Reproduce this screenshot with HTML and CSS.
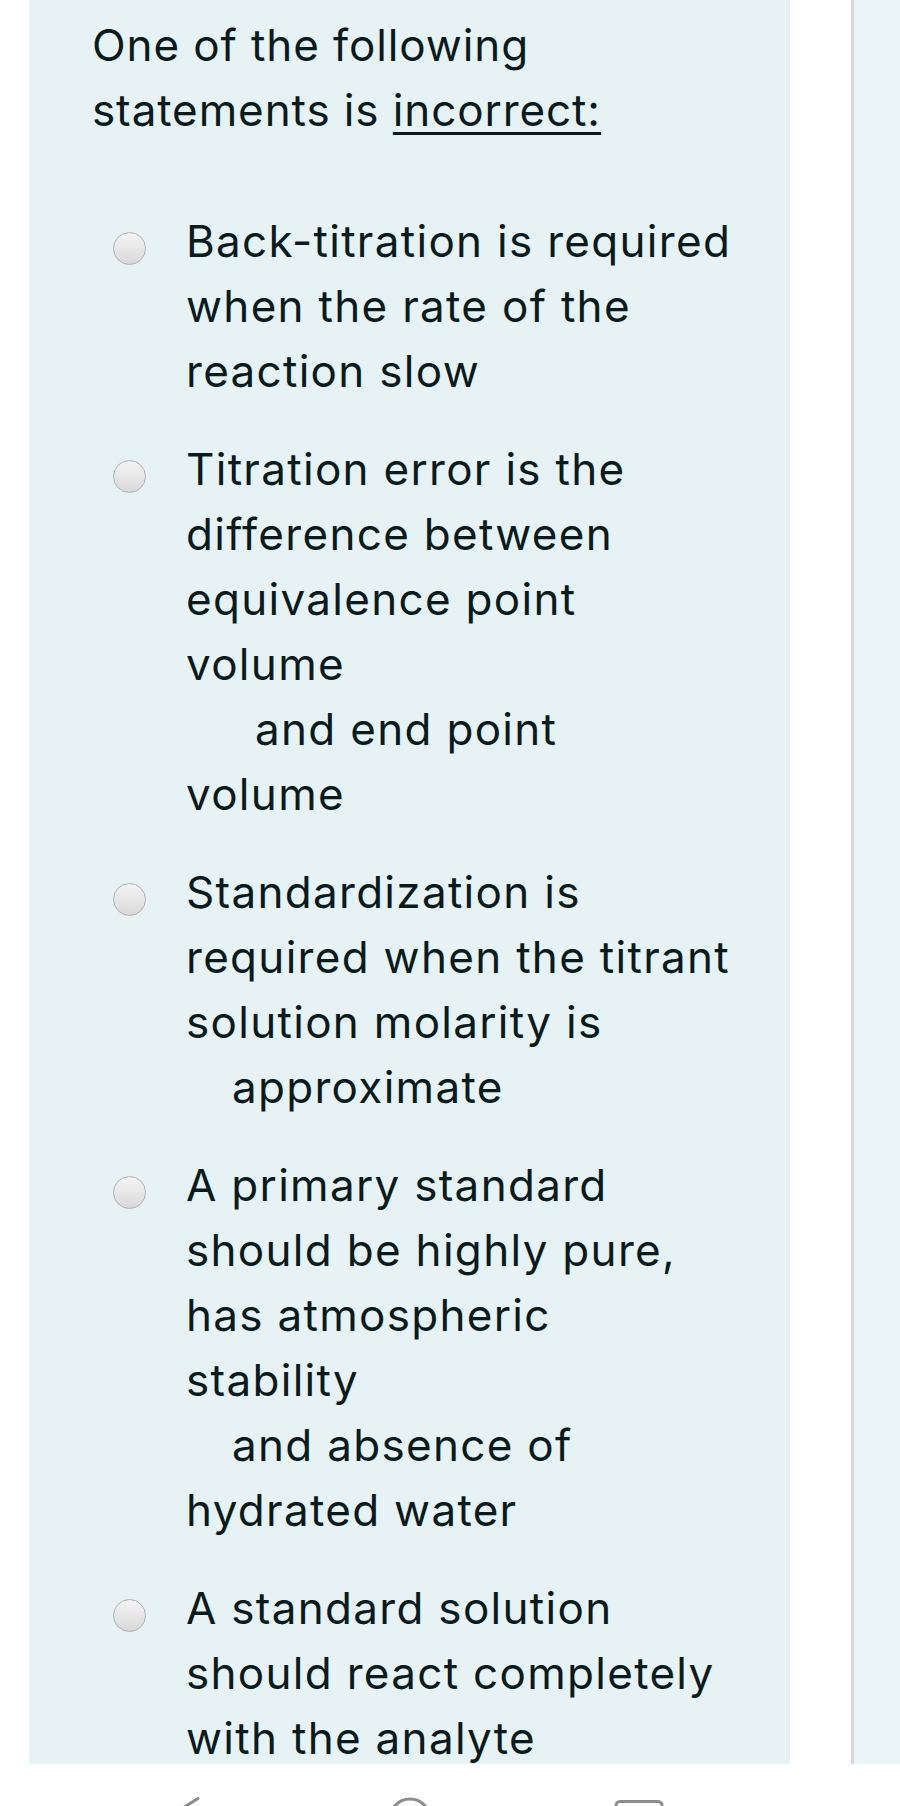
FILE: index.html
```html
<!DOCTYPE html>
<html>
<head>
<meta charset="utf-8">
<link rel="stylesheet" href="styles.css">
</head>
<body>
<div class="screen">
  <div class="top">
    <div class="panel">
      <div class="question">One of the following<br>statements is <span class="u">incorrect:</span></div>
      <div class="options">
        <div class="option">
          <span class="radio"></span>
          <div class="label">Back-titration is required<br>when the rate of the<br>reaction slow</div>
        </div>
        <div class="option">
          <span class="radio"></span>
          <div class="label">Titration error is the<br>difference between<br>equivalence point<br>volume<br><span class="ind6">and end point</span><br>volume</div>
        </div>
        <div class="option">
          <span class="radio"></span>
          <div class="label">Standardization is<br>required when the titrant<br>solution molarity is<br><span class="ind4">approximate</span></div>
        </div>
        <div class="option">
          <span class="radio"></span>
          <div class="label">A primary standard<br>should be highly pure,<br>has atmospheric<br>stability<br><span class="ind4">and absence of</span><br>hydrated water</div>
        </div>
        <div class="option">
          <span class="radio"></span>
          <div class="label">A standard solution<br>should react completely<br>with the analyte</div>
        </div>
      </div>
    </div>
    <div class="gap"></div>
    <div class="divider"></div>
    <div class="next"></div>
  </div>
  <div class="navbar">
    <svg class="nav back" width="40" height="12" viewBox="0 0 40 12"><path d="M26 1.5 L6 14" fill="none" stroke="#8c8c8c" stroke-width="3" stroke-linecap="round"/></svg>
    <svg class="nav home" width="44" height="10" viewBox="0 0 44 10"><circle cx="22" cy="22" r="20" fill="none" stroke="#8c8c8c" stroke-width="3"/></svg>
    <svg class="nav recent" width="50" height="8" viewBox="0 0 50 8"><rect x="2" y="1.5" width="46" height="40" rx="4" fill="none" stroke="#8c8c8c" stroke-width="3"/></svg>
  </div>
</div>
</body>
</html>
```
FILE: styles.css
```css
html, body {
  margin: 0;
  padding: 0;
  background: #ffffff;
}
.screen {
  width: 900px;
  height: 1806px;
  overflow: hidden;
  display: flex;
  flex-direction: column;
}
.top {
  display: flex;
  height: 1764px;
  flex: none;
}
.panel {
  margin-left: 29px;
  width: 761px;
  height: 1764px;
  overflow: hidden;
  background: #e6f2f4;
  box-sizing: border-box;
  padding: 13px 0 0 63px;
  font-family: "Inter", "Liberation Sans", sans-serif;
  color: #0a1b1e;
  font-size: 44px;
  line-height: 65px;
  letter-spacing: 1.3px;
}
.question {
  white-space: nowrap;
  letter-spacing: 0.9px;
}
.u {
  text-decoration: underline;
  text-decoration-thickness: 3px;
  text-underline-offset: 6px;
}
.options {
  margin-top: 66px;
  display: flex;
  flex-direction: column;
  gap: 33px;
}
.option {
  display: flex;
  align-items: flex-start;
}
.radio {
  flex: none;
  width: 31px;
  height: 31px;
  margin: 23px 0 0 21px;
  border-radius: 50%;
  border: 1.5px solid #b0b0b0;
  background: linear-gradient(180deg, #f4f4f4 0%, #e6e6e6 55%, #d8d8d8 100%);
}
.label {
  margin-left: 40px;
  white-space: nowrap;
}
.ind6 { padding-left: 69px; }
.ind4 { padding-left: 46px; }
.gap {
  width: 61px;
  background: #ffffff;
}
.divider {
  width: 3px;
  background: #d8d8d8;
}
.next {
  flex: 1;
  background: #ebf4f7;
}
.navbar {
  position: relative;
  flex: 1;
  background: #ffffff;
}
.nav {
  position: absolute;
  top: 0;
}
.back { left: 172px; top: 33px; }
.home { left: 388px; top: 33px; }
.recent { left: 614px; top: 36px; }
```
